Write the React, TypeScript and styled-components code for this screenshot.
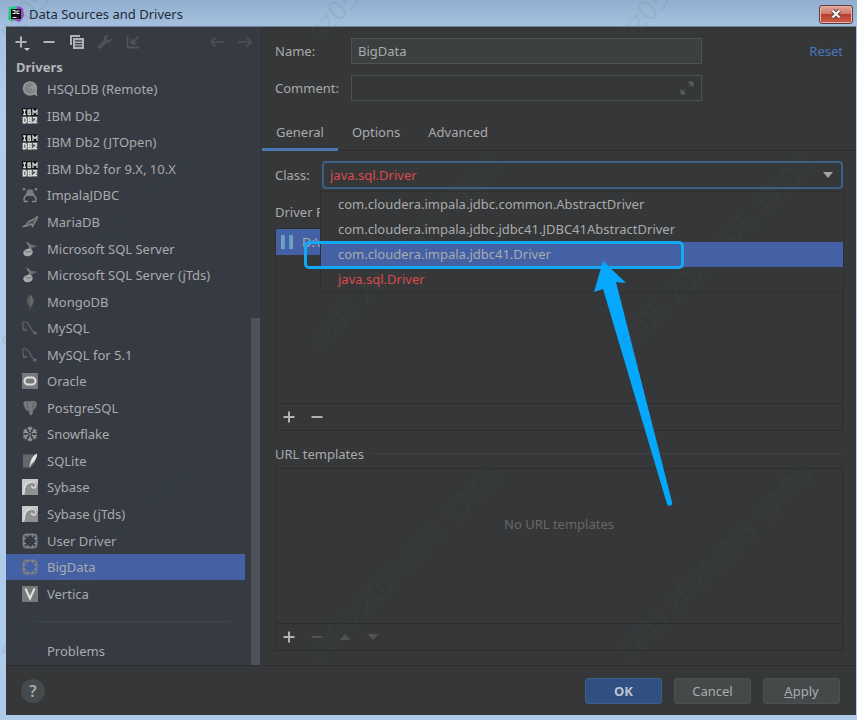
import React, { useState } from "react";
import styled, { createGlobalStyle, css } from "styled-components";

const c = {
  panel: "#363738",
  side: "#363a43",
  text: "#a9abac",
  line: "#2c2d2e",
  select: "#4461a6",
  red: "#dd4a4e",
  mark: "#12a8f4",
};

const GlobalStyle = createGlobalStyle`
  * { box-sizing: border-box; }
  body { margin: 0; }
  body, button, input, select {
    font-family: "Noto Sans", "Open Sans", sans-serif;
    font-size: 13px;
    line-height: 20px;
    color: ${c.text};
  }
  button, input, select { margin: 0; padding: 0; border: 0; background: none; outline: none; }
`;

const Window = styled.div`
  position: relative;
  display: flex;
  flex-direction: column;
  height: 100vh;
  min-height: 640px;
  padding: 0 1px 5px 6px;
  background: linear-gradient(#92afcf, #a6c1df 27px, #b3cdea 110px, #aecbe9);
  overflow: hidden;
`;

const TitleBar = styled.header`
  display: flex;
  align-items: center;
  flex: none;
  height: 27px;
  padding: 2px 3px 0 2px;
  gap: 5px;
  border-bottom: 1px solid #6f8398;
`;

const Title = styled.h1`
  flex: 1;
  margin: 0;
  font-size: 13px;
  font-weight: 400;
  color: #1d2a38;
`;

const CloseButton = styled.button`
  display: grid;
  place-items: center;
  width: 34px;
  height: 19px;
  border: 1px solid #5d3a48;
  border-radius: 3px;
  background: linear-gradient(#e2a59b, #d27a6d 45%, #b93f2d 50%, #c9604b);
  box-shadow: inset 0 0 0 1px #e9b5ab;
`;

const Body = styled.div`
  display: flex;
  flex: 1;
  min-height: 0;
  border-bottom: 1px solid ${c.line};
`;

const Sidebar = styled.nav`
  display: flex;
  flex-direction: column;
  flex: none;
  width: 256px;
  background: ${c.side};
  border-right: 1px solid #303237;
`;

const SideScroll = styled.div`
  display: flex;
  flex: 1;
  min-height: 0;
`;

const SideMain = styled.div`
  display: flex;
  flex-direction: column;
  width: 239px;
`;

const SideTools = styled.div`
  display: flex;
  align-items: center;
  flex: none;
  height: 30px;
  padding: 0 8px 0 7px;
  gap: 12px;
`;

const ToolButton = styled.button<{ $dim?: boolean }>`
  display: grid;
  place-items: center;
  flex: none;
  width: 16px;
  height: 16px;
  color: ${(p) => (p.$dim ? "#515252" : "#b0b2b3")};
`;

const Spacer = styled.div`
  flex: 1;
`;

const SideHeading = styled.h2`
  flex: none;
  margin: 0;
  padding: 0 10px;
  height: 19px;
  font-size: 13px;
  font-weight: 700;
  color: #b4b7ba;
`;

const DriverList = styled.ul`
  display: flex;
  flex-direction: column;
  flex: 1;
  margin: 0;
  padding: 0;
  list-style: none;
`;

const DriverItem = styled.li`
  display: flex;
  flex: 1;
`;

const DriverButton = styled.button<{ $on: boolean }>`
  display: flex;
  align-items: center;
  flex: 1;
  gap: 9px;
  padding-left: 16px;
  text-align: left;
  color: ${c.text};
  background: ${(p) => (p.$on ? c.select : "transparent")};
`;

const Divider = styled.hr`
  margin: 14px 15px 19px 30px;
  border: 0;
  border-top: 1px solid #42454b;
`;

const ProblemsButton = styled.button`
  flex: none;
  height: 20px;
  margin-bottom: 4px;
  padding-left: 41px;
  text-align: left;
`;

const ScrollTrack = styled.div`
  display: flex;
  align-items: flex-end;
  flex: 1;
  padding-left: 6px;
`;

const ScrollThumb = styled.div`
  width: 9px;
  height: 59%;
  background: #50525b;
`;

const Content = styled.main`
  display: flex;
  flex-direction: column;
  flex: 1;
  min-width: 0;
  padding: 11px 13px 14px 0;
  background: ${c.panel};
`;

const FormRow = styled.div`
  display: flex;
  align-items: center;
  flex: none;
  margin: 0 0 11px 13px;
  height: 26px;
`;

const FormLabel = styled.label`
  flex: none;
  width: 76px;
`;

const FieldBox = styled.div<{ $filled?: boolean }>`
  display: flex;
  align-items: center;
  flex: 1;
  max-width: 351px;
  height: 26px;
  padding: 0 6px;
  border: 1px solid #4f5253;
  background: ${(p) => (p.$filled ? "#3c4040" : "transparent")};
`;

const TextInput = styled.input`
  flex: 1;
  min-width: 0;
`;

const ResetLink = styled.a`
  margin-left: auto;
  color: #4678c0;
  text-decoration: none;
`;

const Tabs = styled.div`
  display: flex;
  flex: none;
  margin: 3px -13px 0 0;
  height: 36px;
  border-bottom: 1px solid ${c.line};
`;

const Tab = styled.button<{ $on?: boolean }>`
  height: 36px;
  padding: 0 14px;
  border-bottom: 3px solid ${(p) => (p.$on ? "#4a78b0" : "transparent")};
`;

const ClassRow = styled.div`
  display: flex;
  align-items: center;
  flex: none;
  margin: 10px 0 13px 13px;
  height: 28px;
`;

const ClassLabel = styled.label`
  flex: none;
  width: 47px;
`;

const Combo = styled.div`
  position: relative;
  display: flex;
  align-items: center;
  flex: 1;
  height: 28px;
  padding-right: 8px;
  border: 2px solid #3d6185;
  border-radius: 4px;
`;

const ComboSelect = styled.select`
  flex: 1;
  min-width: 0;
  padding-left: 6px;
  appearance: none;
  color: ${c.red};
`;

const Popup = styled.ul`
  position: absolute;
  z-index: 1;
  top: 28px;
  left: -4px;
  right: -3px;
  margin: 0;
  padding: 0;
  list-style: none;
  background: ${c.panel};
  border: 1px solid #2f3031;
`;

const PopupItem = styled.li<{ $on?: boolean; $bad?: boolean }>`
  height: 25px;
  padding: 2px 17px;
  white-space: nowrap;
  color: ${(p) => (p.$bad ? c.red : c.text)};
  background: ${(p) => (p.$on ? c.select : "transparent")};
`;

const Highlight = styled.div`
  position: absolute;
  z-index: 2;
  top: 78px;
  left: -20px;
  width: 380px;
  height: 28px;
  border: 3px solid ${c.mark};
  border-radius: 5px;
  pointer-events: none;
`;

const Pointer = styled.svg`
  position: absolute;
  z-index: 3;
  top: 98px;
  left: 265px;
  pointer-events: none;
`;

const SectionTitle = styled.h3<{ $gap: number }>`
  display: flex;
  align-items: center;
  flex: none;
  gap: 8px;
  margin: 0 0 ${(p) => p.$gap}px 13px;
  height: 20px;
  font-size: 13px;
  font-weight: 400;
`;

const TitleRule = styled.span`
  flex: 1;
  height: 1px;
  background: #414344;
`;

const Box = styled.section<{ $grow: number; $last?: boolean }>`
  display: flex;
  flex-direction: column;
  flex: ${(p) => p.$grow} 1 0;
  margin-left: 13px;
  border: 1px solid ${c.line};
  ${(p) =>
    !p.$last &&
    css`
      margin-bottom: 13px;
    `}
`;

const BoxBody = styled.div`
  flex: 1;
`;

const EmptyBody = styled.div`
  display: grid;
  place-items: center;
  flex: 1;
  padding-bottom: 44px;
  color: #656768;
`;

const BoxTools = styled.div`
  display: flex;
  align-items: center;
  flex: none;
  height: 27px;
  padding-left: 5px;
  gap: 12px;
  border-top: 1px solid ${c.line};
`;

const FileRow = styled.div`
  display: flex;
  align-items: center;
  gap: 7px;
  height: 26px;
  padding-left: 3px;
  background: ${c.select};
`;

const Footer = styled.footer`
  display: flex;
  align-items: center;
  flex: none;
  gap: 12px;
  height: 49px;
  padding: 0 16px 0 15px;
  background: ${c.panel};
`;

const HelpButton = styled.button`
  width: 24px;
  height: 24px;
  margin-right: auto;
  border-radius: 50%;
  background: #454a4c;
  font-size: 16px;
  font-weight: 600;
`;

const ActionButton = styled.button<{ $primary?: boolean }>`
  width: 77px;
  height: 26px;
  border-radius: 3px;
  border: 1px solid ${(p) => (p.$primary ? "#3b5f8a" : "#4d5152")};
  background: ${(p) => (p.$primary ? "#2f5080" : "#45494a")};
  color: ${(p) => (p.$primary ? "#bcc5d0" : "#aaadae")};
  font-weight: ${(p) => (p.$primary ? 700 : 400)};
`;

const WatermarkLayer = styled.div`
  position: absolute;
  z-index: 10;
  inset: 16px 0 auto 12px;
  display: grid;
  grid-template-columns: repeat(3, 310px);
  grid-auto-rows: 310px;
  pointer-events: none;
`;

const Watermark = styled.span`
  align-self: start;
  justify-self: start;
  font-size: 28px;
  line-height: 28px;
  white-space: nowrap;
  transform: rotate(-45deg);
  transform-origin: left bottom;
  color: rgba(70, 100, 90, 0.1);
`;

const Svg = ({ children, size = 16 }: { children: React.ReactNode; size?: number }) => (
  <svg width={size} height={size} viewBox="0 0 16 16" fill="none" aria-hidden="true">
    {children}
  </svg>
);

const Plus = ({ menu }: { menu?: boolean }) => (
  <svg width="16" height="16" viewBox="0 0 16 16" overflow="visible" aria-hidden="true">
    <path d="M7 2.500h2V7h4.500v2H9v4.500H7V9H2.500V7H7z" fill="currentColor" />
    {menu && <path d="M11 14h6l-3 3z" fill="#c8cacb" />}
  </svg>
);
const Minus = () => <Svg><path d="M2.500 7h11v2h-11z" fill="currentColor" /></Svg>;
const Copy = () => (
  <Svg>
    <path d="M1 1h10v2H3v8H1z" fill="currentColor" />
    <path fillRule="evenodd" d="M4 4h11v11H4zM6 6.200v1.300h7V6.200zm0 2.700v1.300h7V8.900zm0 2.600v1.300h7v-1.300z" fill="currentColor" />
  </Svg>
);
const Wrench = () => (
  <Svg>
    <path d="M14.400 4.200 11.900 6.500 9.800 6l-.6-2.100L11.600 1.500C9.700.9 7.700 1.800 7 3.600c-.3.900-.3 1.700 0 2.500L1.500 11.700c-.7.700-.7 1.800 0 2.500s1.800.7 2.500 0l5.600-5.600c2.700 1 5.300-1.200 4.800-4.400z" fill="currentColor" />
  </Svg>
);
const ImportIcon = () => (
  <Svg>
    <path d="M2.500 2v11.500H14M13.500 2.500 7 9M6.500 4.500v5h5" stroke="currentColor" strokeWidth="1.800" />
  </Svg>
);
const Arrow = ({ back }: { back?: boolean }) => (
  <Svg>
    <path d={back ? "M15 8H2M6.500 3.500 2 8l4.500 4.500" : "M1 8h13M9.500 3.500 14 8l-4.500 4.500"} stroke="currentColor" strokeWidth="1.600" />
  </Svg>
);
const Triangle = ({ up }: { up?: boolean }) => (
  <Svg><path d={up ? "M2.500 11h11L8 5z" : "M2.500 5h11L8 11z"} fill="currentColor" /></Svg>
);

const Db2Icon = () => (
  <Svg>
    <path d="M0 0h16v8H0z" fill="#141516" />
    <path d="M0 8h16v8H0z" fill="#55585b" />
    <path d="M1 2h3M1 6.500h3M2.500 2v4.500M6 1.500v5.500M6 2h2.200v2H6M8.500 4.300v2.200H6M11 7V2l2 2.500L15 2v5" stroke="#d5d7d7" strokeWidth="1.300" />
    <path d="M1.500 9.700v5h1.700l1-1v-3l-1-1zM6.500 9.700v5H9v-2.500H6.500H9V9.700zM11 9.800h3.200v2.100l-3 2.700H15" stroke="#dcdddd" strokeWidth="1.500" />
  </Svg>
);
const HsqlIcon = () => (
  <Svg>
    <circle cx="8" cy="7.500" r="7.300" fill="#929495" />
    <path d="m10 13 5.500 2-1-5z" fill="#929495" />
    <path d="M12.500 8a4.500 4.500 0 1 1-1.800-4.100M10 8a2.300 2.300 0 1 1-1-2.300M8 7.500h1" stroke="#6c6e71" strokeWidth="1" />
  </Svg>
);
const ImpalaIcon = () => (
  <Svg>
    <circle cx="2" cy="2.200" r="1.300" fill="#83868a" />
    <circle cx="14" cy="2.200" r="1.300" fill="#83868a" />
    <path d="M5.500 2.500h5L12.500 8h-9z" fill="#777a7e" />
    <path d="M5 8c-3 1.200-3.300 4-2.500 6.500H6M11 8c3 1.200 3.300 4 2.500 6.500H10M5 8h6" stroke="#85888b" strokeWidth="1.500" />
  </Svg>
);
const MariaIcon = () => (
  <Svg>
    <path d="M.5 12.500c3-.2 4-1.500 5.500-4C7.500 6 10 6.500 12 5l3.500-2.500c-.3 2-1 4-2.500 5.500-1 1.200-1 3-2.500 4.500l-.5-2c-2.500-.6-4 2.500-9.500 2z" stroke="#85888b" strokeWidth="1.200" fill="#56595e" />
  </Svg>
);
const MssqlIcon = () => (
  <Svg>
    <path d="M4 .5c3 0 3 2.500 6 3.300L15.500 5 11 6.500 9.500 9 7 8l1-3C6 4 5 2.500 4 .5z" fill="#686b6e" />
    <path d="M5.500 2.500 8 5.500 7 8" stroke="#a0a3a4" />
    <ellipse cx="6" cy="11.500" rx="4.800" ry="3.700" fill="#a7a9aa" transform="rotate(-15 6 11.500)" />
    <path d="M3 9.500c1.500 2 4 2 6.500.5" stroke="#6f7274" />
  </Svg>
);
const MongoIcon = () => (
  <Svg>
    <path d="M8 .5c4 3.500 5 8.500.7 12.500v2.500H7.500V13C3.200 9 4.300 4 8 .5z" fill="#55575a" />
    <path d="M8 .5c4 3.500 5 8.500.7 12.500H8z" fill="#66686a" />
  </Svg>
);
const MysqlIcon = () => (
  <Svg>
    <path d="M2 11c-1-3-1.500-6.500-.8-9 2.800-.8 5 1 6.500 4 1.300 2.500 2 5 4.300 6l2.500 2.500M12 12l-.5 2.500M12 12l3 .5M2 11l1.500-2L5 11" stroke="#64676b" strokeWidth="1.100" />
  </Svg>
);
const OracleIcon = () => (
  <Svg>
    <path d="M0 0h16v16H0z" fill="#77797b" />
    <rect x="2.500" y="4.500" width="11" height="7" rx="3.500" stroke="#dedfdf" strokeWidth="2" />
  </Svg>
);
const PostgresIcon = () => (
  <Svg>
    <path d="M1.500 2C4 .5 6 1 8 1.500c2-.6 5-.7 6.500.8 1 2-.5 5-2 7.200L11 9.800c0 2 .2 5-2 5.500-2 0-1.800-3-2-5-1 1.200-2.500.5-3.500-1.300C2.300 6.500 1 4 1.500 2z" fill="#77797c" />
    <path d="M5.500 2.500C4.500 5 5 8 6.500 9.500M10.500 2.500c1.300 2 .5 4.500.3 6.500" stroke="#5c5f63" />
  </Svg>
);
const SnowIcon = () => (
  <Svg>
    {[0, 60, 120, 180, 240, 300].map((a) => (
      <path key={a} transform={`rotate(${a} 8 8)`} d="M8 6V.5M5.800 1.500 8 4l2.200-2.500" stroke="#929597" strokeWidth="1.500" />
    ))}
    <circle cx="8" cy="8" r="1" fill="#929597" />
  </Svg>
);
const SqliteIcon = () => (
  <Svg>
    <path d="M1 1.500h12v8L9 14.500H1z" fill="#66696b" />
    <path d="M14.800.5c1.200 2-1.300 7.500-5.300 10.500L7.500 15c.2-5 2.200-12 7.300-14.500z" fill="#e1e2e2" />
  </Svg>
);
const SybaseIcon = () => (
  <Svg>
    <path d="M0 0h16v16H0z" fill="#8f9192" />
    <path d="M0 0h16v6C15 3 12.500 2.200 10 2.500 4.500 3.200 2 8 2.500 16H0z" fill="#c9cbcb" />
    <path d="M2 14C2 7 5 3 10 3c3 0 4.500 2.200 3.800 4.500-1 2.200-4.300 1.800-4.200-.7" stroke="#dcdddd" strokeWidth="1.500" />
  </Svg>
);
const UserIcon = () => (
  <Svg>
    <rect x="1.500" y="1.500" width="13" height="13" rx="3" stroke="#777b80" strokeWidth="2" />
    <path d="M5.500 1v3M10.500 1v3M5.500 12v3M10.500 12v3M1 5.500h3M1 10.500h3M12 5.500h3M12 10.500h3" stroke="#858990" strokeWidth="1.400" />
  </Svg>
);
const VerticaIcon = () => (
  <Svg>
    <path d="M0 0h16v16H0z" fill="#77797b" />
    <path d="M3.500 2.500 8 12.500l4.500-10" stroke="#e2e3e3" strokeWidth="2" />
  </Svg>
);

const drivers: [string, React.FC][] = [
  ["HSQLDB (Remote)", HsqlIcon],
  ["IBM Db2", Db2Icon],
  ["IBM Db2 (JTOpen)", Db2Icon],
  ["IBM Db2 for 9.X, 10.X", Db2Icon],
  ["ImpalaJDBC", ImpalaIcon],
  ["MariaDB", MariaIcon],
  ["Microsoft SQL Server", MssqlIcon],
  ["Microsoft SQL Server (jTds)", MssqlIcon],
  ["MongoDB", MongoIcon],
  ["MySQL", MysqlIcon],
  ["MySQL for 5.1", MysqlIcon],
  ["Oracle", OracleIcon],
  ["PostgreSQL", PostgresIcon],
  ["Snowflake", SnowIcon],
  ["SQLite", SqliteIcon],
  ["Sybase", SybaseIcon],
  ["Sybase (jTds)", SybaseIcon],
  ["User Driver", UserIcon],
  ["BigData", UserIcon],
  ["Vertica", VerticaIcon],
];

const classes = [
  "com.cloudera.impala.jdbc.common.AbstractDriver",
  "com.cloudera.impala.jdbc.jdbc41.JDBC41AbstractDriver",
  "com.cloudera.impala.jdbc41.Driver",
  "java.sql.Driver",
];

export default function App() {
  const [driver, setDriver] = useState("BigData");
  const [driverClass, setDriverClass] = useState("java.sql.Driver");

  return (
    <>
      <GlobalStyle />
      <Window>
        <TitleBar>
          <Svg>
            <path d="M1 1 9 0l-2 8-2 8-5-3z" fill="#22c98a" />
            <path d="m9 0 6 2 1 8-4 6-7-2z" fill="#9b4bc4" />
            <path d="M3 3h10v10H3z" fill="#0c0d10" />
            <path d="M4.500 4.500H7v3H4.500M11.500 5H9v2.500h2.500M4.500 11.500h4" stroke="#e8eaec" strokeWidth="1.100" />
          </Svg>
          <Title>Data Sources and Drivers</Title>
          <CloseButton aria-label="Close">
            <svg width="12" height="10" viewBox="0 0 12 10" aria-hidden="true">
              <path d="m2.500 1.500 7 7m0-7-7 7" stroke="#5c3038" strokeWidth="4" />
              <path d="m2.500 1.500 7 7m0-7-7 7" stroke="#f4f4f4" strokeWidth="2.400" />
            </svg>
          </CloseButton>
        </TitleBar>

        <Body>
          <Sidebar aria-label="Drivers">
            <SideTools>
              <ToolButton aria-label="Add"><Plus menu /></ToolButton>
              <ToolButton aria-label="Remove"><Minus /></ToolButton>
              <ToolButton aria-label="Duplicate"><Copy /></ToolButton>
              <ToolButton aria-label="Settings" $dim><Wrench /></ToolButton>
              <ToolButton aria-label="Import" $dim><ImportIcon /></ToolButton>
              <Spacer />
              <ToolButton aria-label="Back" $dim><Arrow back /></ToolButton>
              <ToolButton aria-label="Forward" $dim><Arrow /></ToolButton>
            </SideTools>
            <SideHeading>Drivers</SideHeading>
            <SideScroll>
              <SideMain>
                <DriverList>
                  {drivers.map(([name, Icon]) => (
                    <DriverItem key={name}>
                      <DriverButton $on={name === driver} onClick={() => setDriver(name)}>
                        <Icon />
                        {name}
                      </DriverButton>
                    </DriverItem>
                  ))}
                </DriverList>
                <Divider />
                <ProblemsButton>Problems</ProblemsButton>
              </SideMain>
              <ScrollTrack><ScrollThumb /></ScrollTrack>
            </SideScroll>
          </Sidebar>

          <Content>
            <FormRow>
              <FormLabel htmlFor="name">Name:</FormLabel>
              <FieldBox $filled><TextInput id="name" defaultValue="BigData" /></FieldBox>
              <ResetLink href="#reset">Reset</ResetLink>
            </FormRow>
            <FormRow>
              <FormLabel htmlFor="comment">Comment:</FormLabel>
              <FieldBox>
                <TextInput id="comment" />
                <ToolButton aria-label="Expand" $dim>
                  <Svg>
                    <path d="M9.500 2h4.500v4.500zM2 9.500V14h4.500zM12.500 3.500l-3 3M3.500 12.500l3-3" fill="#5c6061" stroke="#5c6061" strokeWidth="1" />
                  </Svg>
                </ToolButton>
              </FieldBox>
            </FormRow>
            <Tabs role="tablist">
              <Tab role="tab" aria-selected="true" $on>General</Tab>
              <Tab role="tab" aria-selected="false">Options</Tab>
              <Tab role="tab" aria-selected="false">Advanced</Tab>
            </Tabs>
            <ClassRow>
              <ClassLabel htmlFor="class">Class:</ClassLabel>
              <Combo>
                <ComboSelect id="class" value={driverClass} onChange={(e) => setDriverClass(e.target.value)}>
                  {classes.map((name) => <option key={name}>{name}</option>)}
                </ComboSelect>
                <svg width="10" height="6" viewBox="0 0 10 6" aria-hidden="true">
                  <path d="M0 0h10L5 6z" fill="#a0a2a3" />
                </svg>
                <Popup role="listbox" aria-label="Driver classes">
                  {classes.map((name, i) => (
                    <PopupItem
                      key={name}
                      role="option"
                      aria-selected={i === 2}
                      $on={i === 2}
                      $bad={i === 3}
                      onClick={() => setDriverClass(name)}
                    >
                      {name}
                    </PopupItem>
                  ))}
                </Popup>
                <Highlight />
                <Pointer width="90" height="250" viewBox="0 0 90 250" aria-hidden="true">
                  <path d="M14 0 37 22l-10-1 56 220a2.500 2.500 0 0 1-5 2L14 28 5 31z" fill="#05a8fd" />
                </Pointer>
              </Combo>
            </ClassRow>
            <SectionTitle $gap={6}>Driver Files</SectionTitle>
            <Box $grow={202}>
              <BoxBody>
                <FileRow>
                  <Svg>
                    <path d="M2 1h4v14H2zM10 1h4v14h-4z" fill="#8a9bab" />
                    <path d="M4 1h2v14H4zM10 1h2v14h-2z" fill="#4fa3d4" />
                  </Svg>
                  D:\
                </FileRow>
              </BoxBody>
              <BoxTools>
                <ToolButton aria-label="Add file"><Plus /></ToolButton>
                <ToolButton aria-label="Remove file"><Minus /></ToolButton>
              </BoxTools>
            </Box>
            <SectionTitle $gap={4}>URL templates<TitleRule /></SectionTitle>
            <Box $grow={182} $last>
              <EmptyBody>No URL templates</EmptyBody>
              <BoxTools>
                <ToolButton aria-label="Add template"><Plus /></ToolButton>
                <ToolButton aria-label="Remove template" $dim><Minus /></ToolButton>
                <ToolButton aria-label="Move up" $dim><Triangle up /></ToolButton>
                <ToolButton aria-label="Move down" $dim><Triangle /></ToolButton>
              </BoxTools>
            </Box>
          </Content>
        </Body>

        <Footer>
          <HelpButton aria-label="Help">?</HelpButton>
          <ActionButton $primary>OK</ActionButton>
          <ActionButton>Cancel</ActionButton>
          <ActionButton><u>A</u>pply</ActionButton>
        </Footer>

        <WatermarkLayer aria-hidden="true">
          {Array.from({ length: 9 }, (_, i) => <Watermark key={i}>sz05 2021/3/5 17:03</Watermark>)}
        </WatermarkLayer>
      </Window>
    </>
  );
}
